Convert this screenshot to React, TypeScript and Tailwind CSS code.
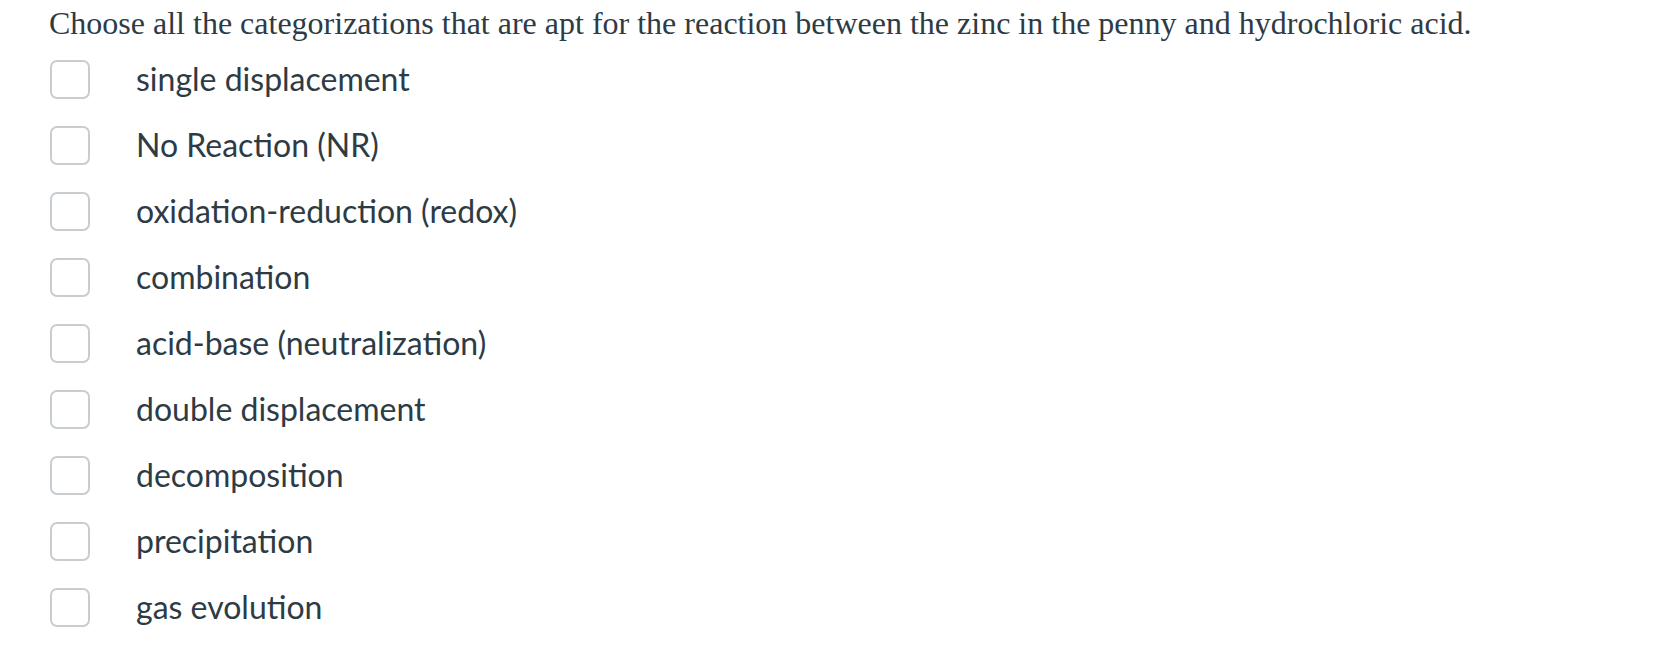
const options = [
  "single displacement",
  "No Reaction (NR)",
  "oxidation-reduction (redox)",
  "combination",
  "acid-base (neutralization)",
  "double displacement",
  "decomposition",
  "precipitation",
  "gas evolution",
]

export default function App() {
  return (
    <div className="min-h-[648px] bg-white pl-[49px] text-[#2d3b45]">
      <p className="font-['Liberation_Serif',serif] text-[32px] leading-[46px]">
        Choose all the categorizations that are apt for the reaction between the zinc in the penny and hydrochloric acid.
      </p>
      <div className="flex flex-col">
        {options.map(label => (
          <label key={label} className="flex h-[66px] items-center">
            <span className="ml-[1px] h-[39px] w-[40px] shrink-0 rounded-[7px] border-2 border-[#c7cdd1] bg-white" />
            <span className="ml-[46px] font-['Lato',sans-serif] text-[32px]">{label}</span>
          </label>
        ))}
      </div>
    </div>
  )
}
